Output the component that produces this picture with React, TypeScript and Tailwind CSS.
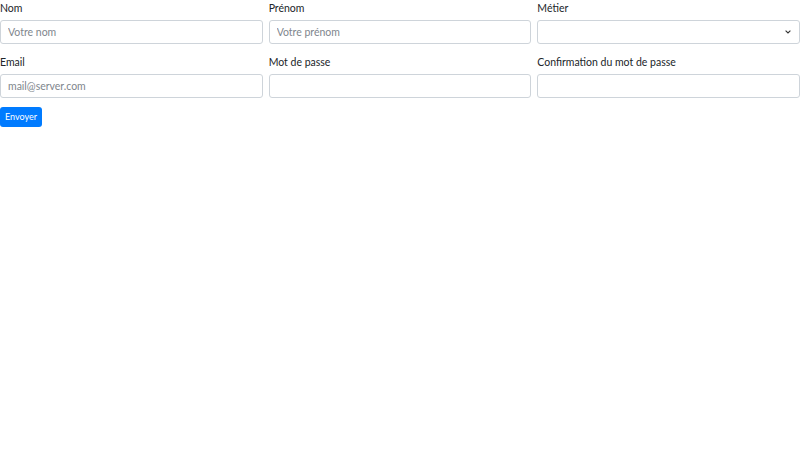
import { ReactNode } from "react";

type FieldProps = {
    label: string,
    children: ReactNode
}

function Field(props: FieldProps): JSX.Element {
    const { label, children } = props;

    return (
        <div className="flex flex-col">
            <label className="mb-[4px] text-[10.5px] leading-[16px] text-[#212529]">{label}</label>
            {children}
        </div>
    )
}

const inputClass = "block h-[24px] w-full rounded-[3px] border border-[#ced4da] bg-white px-[7px] text-[10.5px] text-[#495057] placeholder:text-[#80868d] outline-none";

export default function App(): JSX.Element {
    return (
        <div className="min-h-[450px] bg-white" style={{ fontFamily: 'Lato, "Noto Sans", sans-serif' }}>
            <form className="flex flex-col">
                <div className="mb-[10px] grid grid-cols-3 gap-x-[6px]">
                    <Field label="Nom">
                        <input type="text" className={inputClass} placeholder="Votre nom" />
                    </Field>
                    <Field label="Prénom">
                        <input type="text" className={inputClass} placeholder="Votre prénom" />
                    </Field>
                    <Field label="Métier">
                        <div className="relative">
                            <select className={`${inputClass} appearance-none`} defaultValue="">
                                <option value=""></option>
                            </select>
                            <svg className="pointer-events-none absolute right-[9px] top-[10px]" width="6" height="4" viewBox="0 0 6 4" fill="none">
                                <path d="M0.6 0.6 L3 3 L5.4 0.6" stroke="#333" strokeWidth="1.1" />
                            </svg>
                        </div>
                    </Field>
                </div>
                <div className="mb-[9px] grid grid-cols-3 gap-x-[6px]">
                    <Field label="Email">
                        <input type="email" className={inputClass} placeholder="mail@server.com" />
                    </Field>
                    <Field label="Mot de passe">
                        <input type="password" className={inputClass} />
                    </Field>
                    <Field label="Confirmation du mot de passe">
                        <input type="password" className={inputClass} />
                    </Field>
                </div>
                <div className="flex">
                    <button type="button" className="h-[20px] rounded-[3px] bg-[#007bff] px-[5px] text-[9px] leading-[20px] text-white">
                        Envoyer
                    </button>
                </div>
            </form>
        </div>
    )
}
